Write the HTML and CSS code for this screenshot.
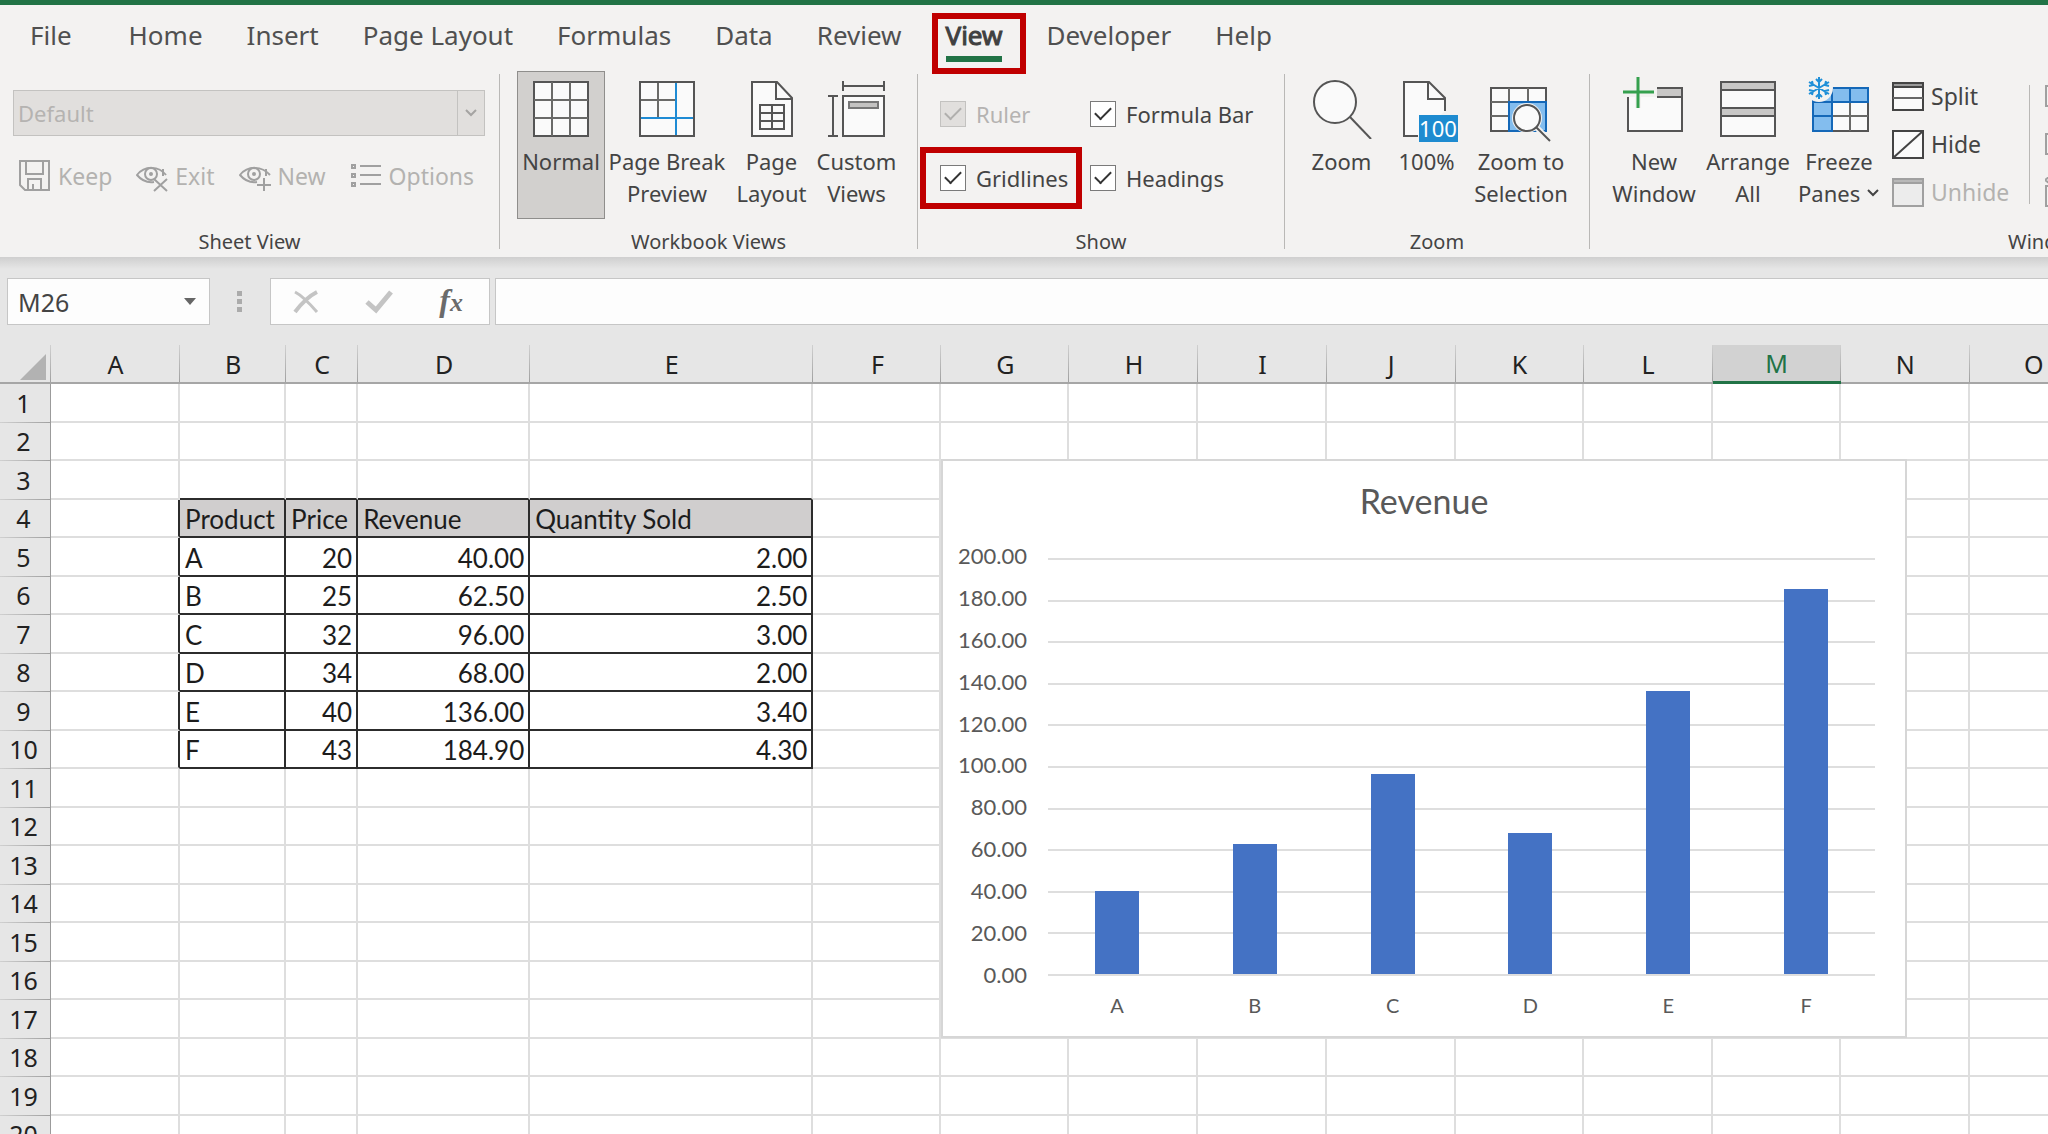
FILE: index.html
```html
<!DOCTYPE html>
<html lang="en">
<head>
<meta charset="utf-8">
<title>Workbook - View</title>
<link rel="stylesheet" href="styles.css">
</head>
<body>
<header class="chrome">
  <nav class="tabs" aria-label="Ribbon tabs">
    <a href="#file">File</a>
    <a href="#home">Home</a>
    <a href="#insert">Insert</a>
    <a href="#layout">Page Layout</a>
    <a href="#formulas">Formulas</a>
    <a href="#data">Data</a>
    <a href="#review">Review</a>
    <a href="#view" class="active" aria-current="page">View<span class="mark mark-tab"></span></a>
    <a href="#developer">Developer</a>
    <a href="#help">Help</a>
  </nav>

  <div class="ribbon">
    <section class="group group-sheetview">
      <div class="body">
        <div class="combo">
          <select aria-label="Sheet view" disabled><option>Default</option></select>
          <span class="combo-arrow"><svg width="14" height="10" viewBox="0 0 14 10"><path d="M2 2l5 5 5-5" fill="none" stroke="#a5a4a2" stroke-width="2"/></svg></span>
        </div>
        <div class="view-actions">
          <button class="flat" disabled>
            <svg width="32" height="32" viewBox="0 0 32 32" fill="none" stroke="#a0a0a0" stroke-width="2"><path d="M1 1h29v29H6l-5-5z"/><path d="M7 1v13h17V1M9 30V19h13v11M14 30v-6"/></svg>Keep</button>
          <button class="flat" disabled>
            <svg width="32" height="32" viewBox="0 0 32 32" fill="none" stroke="#a0a0a0" stroke-width="2"><path d="M30 15C23 6 9 5 1 15c5 6 10 8 17 7"/><circle cx="15" cy="14" r="6"/><circle cx="15" cy="14" r="1"/><path d="M27 9v7M18 19l13 12M31 19L18 31"/></svg>Exit</button>
          <button class="flat" disabled>
            <svg width="32" height="32" viewBox="0 0 32 32" fill="none" stroke="#a0a0a0" stroke-width="2"><path d="M31 15C23 6 9 5 1 15c5 6 10 8 17 7"/><circle cx="15" cy="14" r="6"/><circle cx="15" cy="14" r="1"/><path d="M27 9v7M25 18v13M18 25h14"/></svg>New</button>
          <button class="flat" disabled>
            <svg width="32" height="32" viewBox="0 0 32 32" fill="none" stroke="#a0a0a0" stroke-width="2"><path d="M2 5h3v3H2zM2 14h3v3H2zM2 23h3v3H2zM10 6h21M10 15h21M10 24h21"/></svg>Options</button>
        </div>
      </div>
      <h2>Sheet View</h2>
    </section>
    <span class="sep"></span>

    <section class="group group-workbook">
      <div class="body row">
        <button class="big w-normal pressed" aria-pressed="true">
          <svg width="62" height="62" viewBox="-3 0 62 62"><rect x="1" y="5" width="54" height="54" fill="#fafafa" stroke="#555" stroke-width="2"/><path d="M19 5v54M37 5v54M1 23h54M1 41h54" stroke="#6a6a68" stroke-width="2"/></svg>
          <span>Normal</span></button>
        <button class="big w-break">
          <svg width="62" height="62" viewBox="-3 0 62 62"><rect x="1" y="5" width="54" height="54" fill="#fafafa" stroke="#555" stroke-width="2"/><path d="M19 6v35M2 23h35" stroke="#6a6a68" stroke-width="2"/><path d="M37 6v52M2 41h52" stroke="#1e8bd4" stroke-width="2"/></svg>
          <span>Page Break<br>Preview</span></button>
        <button class="big w-layout">
          <svg width="62" height="62" viewBox="-10 0 62 62" stroke="#555" stroke-width="2"><path d="M1 5h25l15 16v38H1z" fill="#fafafa"/><path d="M25 5v17h16" fill="none"/><rect x="9" y="28" width="24" height="24" fill="#fafafa"/><path d="M21 28v24M9 36h24M9 44h24"/></svg>
          <span>Page<br>Layout</span></button>
        <button class="big w-layout">
          <svg width="62" height="62" viewBox="-2 0 62 62" stroke="#555" stroke-width="2"><rect x="15" y="19" width="41" height="40" fill="#fafafa"/><rect x="21" y="25" width="29" height="6" fill="#c4c3c2" stroke="#777"/><path d="M15 9h41M15 4v10M56 4v10M5 19v40M0 19h10M0 59h10"/></svg>
          <span>Custom<br>Views</span></button>
      </div>
      <h2>Workbook Views</h2>
    </section>
    <span class="sep"></span>

    <section class="group group-show">
      <div class="body checks">
        <label class="off"><input type="checkbox" checked disabled>Ruler</label>
        <label><input type="checkbox" checked>Formula Bar</label>
        <label><input type="checkbox" checked>Gridlines<span class="mark mark-check"></span></label>
        <label><input type="checkbox" checked>Headings</label>
      </div>
      <h2>Show</h2>
    </section>
    <span class="sep"></span>

    <section class="group group-zoom">
      <div class="body row">
        <button class="big w-zoom">
          <svg width="62" height="62" viewBox="-2 0 62 62" stroke="#555" stroke-width="2"><circle cx="22" cy="25" r="21" fill="#fafafa"/><path d="M37 40l21 22"/></svg>
          <span>Zoom</span></button>
        <button class="big w-zoom">
          <svg width="62" height="66" viewBox="-7 0 62 66"><path d="M42 34V21L26 5H1v54h14" fill="#fafafa" stroke="#555" stroke-width="2"/><path d="M25 5v17h16" fill="none" stroke="#555" stroke-width="2"/><rect x="16" y="38" width="39" height="27" fill="#1e8bd0"/><text x="35" y="60" class="icon-num">100</text></svg>
          <span>100%</span></button>
        <button class="big w-select">
          <svg width="62" height="66" viewBox="0 0 62 66"><path d="M1 11h55v43H1z" fill="#fafafa" stroke="#555" stroke-width="2"/><path d="M19 11v43M38 11v14M1 25h55M1 39h18" stroke="#6a6a68" stroke-width="2"/><path d="M19 25h37v29H19z" fill="#83bdee" stroke="#1468b8" stroke-width="2"/><circle cx="37" cy="41" r="15" fill="#f3f2f1"/><path d="M46 50l13 13" stroke="#f3f2f1" stroke-width="6"/><circle cx="37" cy="41" r="13" fill="#fafafa" stroke="#555" stroke-width="2"/><path d="M46 50l14 14" stroke="#555" stroke-width="2"/></svg>
          <span>Zoom to<br>Selection</span></button>
      </div>
      <h2>Zoom</h2>
    </section>
    <span class="sep"></span>

    <section class="group group-window">
      <div class="body row">
        <button class="big w-window">
          <svg width="62" height="62" viewBox="0 0 62 62"><path d="M5 20h54v34H5z" fill="#fafafa"/><path d="M34 11h25v9H34z" fill="#c8c7c6"/><path d="M34 11h25v43H5V20M34 20h25" fill="none" stroke="#555" stroke-width="2"/><path d="M15 0v31M0 15h31" stroke="#f3f2f1" stroke-width="6"/><path d="M15 0v31M0 15h31" stroke="#35a04e" stroke-width="3"/></svg>
          <span>New<br>Window</span></button>
        <button class="big w-window">
          <svg width="62" height="62" viewBox="-3 0 62 62" stroke="#555" stroke-width="2"><rect x="1" y="5" width="54" height="54" fill="#fafafa"/><path d="M1 5h54v8H1zM1 31h54v8H1z" fill="#c8c7c6"/></svg>
          <span>Arrange<br>All</span></button>
        <button class="big w-freeze">
          <svg width="62" height="62" viewBox="0 0 62 62" stroke-width="2"><path d="M24 25h36v29H24z" fill="#fafafa" stroke="#555"/><path d="M42 25v29M24 39h36" stroke="#6a6a68"/><path d="M5 11h55v14H24v29H5z" fill="#83bdee" stroke="#1468b8"/><path d="M24 11v14M42 11v14M5 39h19M5 25h19" stroke="#1468b8"/><circle cx="11" cy="11" r="14" fill="#f3f2f1"/><path d="M11 0v22M1 5l20 12M21 5L1 17M8 2l3 3 3-3M8 20l3-3 3 3M1 9l4-1-1-4M21 13l-4 1 1 4M1 13l4 1-1 4M21 9l-4-1 1-4" fill="none" stroke="#2090d8"/></svg>
          <span>Freeze<br>Panes <svg class="chev" width="14" height="10" viewBox="0 0 14 10"><path d="M2 2l5 5 5-5" fill="none" stroke="#444" stroke-width="2"/></svg></span></button>
        <div class="small-stack">
          <button class="flat"><svg width="32" height="29" viewBox="0 0 32 29" stroke="#444" stroke-width="2"><path d="M1 1h30v27H1z" fill="#fafafa"/><path d="M1 1h30v4H1z" fill="#999"/><path d="M1 16h30" stroke="#666"/></svg>Split</button>
          <button class="flat"><svg width="32" height="29" viewBox="0 0 32 29" stroke="#444" stroke-width="2"><path d="M1 1h30v27H1z" fill="#fafafa"/><path d="M1 28L31 1"/></svg>Hide</button>
          <button class="flat" disabled><svg width="32" height="29" viewBox="0 0 32 29" stroke="#a0a0a0" stroke-width="2"><path d="M1 1h30v27H1z" fill="#ececec"/><path d="M1 1h30v4H1z" fill="#b8b8b8"/></svg>Unhide</button>
        </div>
        <span class="sep sep-inner"></span>
        <div class="small-stack">
          <button class="flat" aria-label="View side by side" disabled><svg width="32" height="22" viewBox="0 0 32 22" fill="none" stroke="#a0a0a0" stroke-width="2"><path d="M1 1h12v20H1zM18 1h12v20H18z"/></svg></button>
          <button class="flat" aria-label="Synchronous scrolling" disabled><svg width="32" height="22" viewBox="0 0 32 22" fill="none" stroke="#a0a0a0" stroke-width="2"><path d="M1 1h12v20H1zM18 1h12v20H18z"/></svg></button>
          <button class="flat" aria-label="Reset window position" disabled><svg width="32" height="30" viewBox="0 0 32 30" fill="none" stroke="#a0a0a0" stroke-width="2"><path d="M1 9h12v20H1zM18 9h12v20H18zM4 0L0 3l4 3"/></svg></button>
        </div>
      </div>
      <h2>Window</h2>
    </section>
  </div>
</header>

<div class="formula-bar">
  <div class="name-box">
    <input type="text" value="M26" aria-label="Name box">
    <button aria-label="Show names"><svg width="12" height="7" viewBox="0 0 12 7"><path d="M0 0h12L6 7z" fill="#666"/></svg></button>
  </div>
  <svg class="grip" width="6" height="22" viewBox="0 0 6 22"><path d="M0 0h5v5H0zM0 8h5v5H0zM0 16h5v5H0z" fill="#ababab"/></svg>
  <div class="fx-box">
    <button aria-label="Cancel"><svg width="26" height="24" viewBox="0 0 26 24" fill="none" stroke="#c4c4c4"><path d="M2 2c8 4 15 12 22 20" stroke-width="3"/><path d="M24 2C14 7 8 14 2 22" stroke-width="4"/></svg></button>
    <button aria-label="Enter"><svg width="28" height="24" viewBox="0 0 28 24"><path d="M2 12l9 8L26 2" fill="none" stroke="#c4c4c4" stroke-width="5"/></svg></button>
    <button class="fx" aria-label="Insert function">f<small>x</small></button>
  </div>
  <input class="formula" type="text" aria-label="Formula">
</div>

<main class="sheet">
<table class="grid">
<colgroup><col class="c-row"><col class="c-odd"><col class="c-b"><col class="c-c"><col class="c-d"><col class="c-e"><col class="c-even"><col class="c-even"><col class="c-odd"><col class="c-even"><col class="c-odd"><col class="c-even"><col class="c-odd"><col class="c-even"><col class="c-odd"><col class="c-even"></colgroup>
<thead><tr><th class="corner"><svg width="26" height="26" viewBox="0 0 26 26"><path d="M26 0v26H0z" fill="#b2b2b2"/></svg></th><th>A</th><th>B</th><th>C</th><th>D</th><th>E</th><th>F</th><th>G</th><th>H</th><th>I</th><th>J</th><th>K</th><th>L</th><th class="current">M</th><th>N</th><th>O</th></tr></thead>
<tbody>
<tr><th>1</th><td></td><td></td><td></td><td></td><td></td><td></td><td></td><td></td><td></td><td></td><td></td><td></td><td></td><td></td><td></td></tr>
<tr><th>2</th><td></td><td></td><td></td><td></td><td></td><td></td><td></td><td></td><td></td><td></td><td></td><td></td><td></td><td></td><td></td></tr>
<tr><th>3</th><td></td><td class="kb"></td><td class="kb"></td><td class="kb"></td><td class="kb"></td><td></td><td></td><td></td><td></td><td></td><td></td><td></td><td></td><td></td><td></td></tr>
<tr><th>4</th><td class="kr"></td><td class="k head">Product</td><td class="k head">Price</td><td class="k head">Revenue</td><td class="k head">Quantity Sold</td><td></td><td></td><td></td><td></td><td></td><td></td><td></td><td></td><td></td><td></td></tr>
<tr><th>5</th><td class="kr"></td><td class="k">A</td><td class="k num">20</td><td class="k num">40.00</td><td class="k num">2.00</td><td></td><td></td><td></td><td></td><td></td><td></td><td></td><td></td><td></td><td></td></tr>
<tr><th>6</th><td class="kr"></td><td class="k">B</td><td class="k num">25</td><td class="k num">62.50</td><td class="k num">2.50</td><td></td><td></td><td></td><td></td><td></td><td></td><td></td><td></td><td></td><td></td></tr>
<tr><th>7</th><td class="kr"></td><td class="k">C</td><td class="k num">32</td><td class="k num">96.00</td><td class="k num">3.00</td><td></td><td></td><td></td><td></td><td></td><td></td><td></td><td></td><td></td><td></td></tr>
<tr><th>8</th><td class="kr"></td><td class="k">D</td><td class="k num">34</td><td class="k num">68.00</td><td class="k num">2.00</td><td></td><td></td><td></td><td></td><td></td><td></td><td></td><td></td><td></td><td></td></tr>
<tr><th>9</th><td class="kr"></td><td class="k">E</td><td class="k num">40</td><td class="k num">136.00</td><td class="k num">3.40</td><td></td><td></td><td></td><td></td><td></td><td></td><td></td><td></td><td></td><td></td></tr>
<tr><th>10</th><td class="kr"></td><td class="k">F</td><td class="k num">43</td><td class="k num">184.90</td><td class="k num">4.30</td><td></td><td></td><td></td><td></td><td></td><td></td><td></td><td></td><td></td><td></td></tr>
<tr><th>11</th><td></td><td></td><td></td><td></td><td></td><td></td><td></td><td></td><td></td><td></td><td></td><td></td><td></td><td></td><td></td></tr>
<tr><th>12</th><td></td><td></td><td></td><td></td><td></td><td></td><td></td><td></td><td></td><td></td><td></td><td></td><td></td><td></td><td></td></tr>
<tr><th>13</th><td></td><td></td><td></td><td></td><td></td><td></td><td></td><td></td><td></td><td></td><td></td><td></td><td></td><td></td><td></td></tr>
<tr><th>14</th><td></td><td></td><td></td><td></td><td></td><td></td><td></td><td></td><td></td><td></td><td></td><td></td><td></td><td></td><td></td></tr>
<tr><th>15</th><td></td><td></td><td></td><td></td><td></td><td></td><td></td><td></td><td></td><td></td><td></td><td></td><td></td><td></td><td></td></tr>
<tr><th>16</th><td></td><td></td><td></td><td></td><td></td><td></td><td></td><td></td><td></td><td></td><td></td><td></td><td></td><td></td><td></td></tr>
<tr><th>17</th><td></td><td></td><td></td><td></td><td></td><td></td><td></td><td></td><td></td><td></td><td></td><td></td><td></td><td></td><td></td></tr>
<tr><th>18</th><td></td><td></td><td></td><td></td><td></td><td></td><td></td><td></td><td></td><td></td><td></td><td></td><td></td><td></td><td></td></tr>
<tr><th>19</th><td></td><td></td><td></td><td></td><td></td><td></td><td></td><td></td><td></td><td></td><td></td><td></td><td></td><td></td><td></td></tr>
<tr><th>20</th><td></td><td></td><td></td><td></td><td></td><td></td><td></td><td></td><td></td><td></td><td></td><td></td><td></td><td></td><td></td></tr>
</tbody>
</table>

<figure class="chart">
  <figcaption>Revenue</figcaption>
  <div class="axis-y"><span>200.00</span><span>180.00</span><span>160.00</span><span>140.00</span><span>120.00</span><span>100.00</span><span>80.00</span><span>60.00</span><span>40.00</span><span>20.00</span><span>0.00</span></div>
  <div class="plot">
    <div class="slot"><i style="height:20%"></i></div>
    <div class="slot"><i style="height:31.25%"></i></div>
    <div class="slot"><i style="height:48%"></i></div>
    <div class="slot"><i style="height:34%"></i></div>
    <div class="slot"><i style="height:68%"></i></div>
    <div class="slot"><i style="height:92.45%"></i></div>
  </div>
  <div class="axis-x"><span>A</span><span>B</span><span>C</span><span>D</span><span>E</span><span>F</span></div>
</figure>
</main>
</body>
</html>
```
FILE: styles.css
```css
* { box-sizing: border-box; }

body {
  margin: 0;
  height: 100vh;
  display: flex;
  flex-direction: column;
  overflow: hidden;
  background: #e6e6e6;
  color: #444;
  font-family: "Noto Sans", "Open Sans", sans-serif;
  font-size: 22px;
}

button, input, select { font: inherit; color: inherit; }
button { border: 0; background: none; padding: 0; }
svg { display: block; flex: none; }

/* ribbon tabs */
.chrome {
  flex: none;
  border-top: 5px solid #217346;
  background: #f3f2f1;
  overflow: hidden;
}
.tabs {
  display: flex;
  gap: 44px;
  height: 66px;
  padding: 10px 30px 0;
  font-size: 26px;
  line-height: 40px;
}
.tabs a { position: relative; color: #505050; text-decoration: none; height: 47px; white-space: nowrap; }
.tabs a:first-child { margin-right: 13px; }
.tabs .active { color: #404040; -webkit-text-stroke: 1px #404040; border-bottom: 6px solid #217346; }
.mark { position: absolute; border: 6px solid #c00000; pointer-events: none; }
.mark-tab { inset: -2px -24px -18px -14px; }
.mark-check { inset: -17px -14px -17px -20px; }

/* ribbon groups */
.ribbon { display: flex; }
.group { display: flex; flex-direction: column; flex: none; }
.group h2 {
  margin: 0 0 1px;
  font-size: 20px;
  font-weight: 400;
  line-height: 28px;
  text-align: center;
}
.body { height: 157px; }
.row { display: flex; }
.sep { flex: none; width: 1px; margin: 3px 0 8px; background: #b9b8b6; }
.group-sheetview { width: 499px; }
.group-workbook { width: 417px; }
.group-show { width: 366px; }
.group-zoom { width: 304px; }
.group-window { width: 912px; }
.group-workbook .body { padding-left: 17px; }
.group-zoom .body { padding-left: 14px; }
.group-window .body { padding-left: 17px; }

.combo {
  display: flex;
  height: 46px;
  margin: 19px 14px 0 13px;
  border: 1px solid #c3c2c0;
  background: #e1dfdd;
}
.combo select {
  flex: 1;
  appearance: none;
  border: 0;
  padding: 0 4px;
  background: none;
  color: #b5b3b1;
  opacity: 1;
}
.combo-arrow { display: flex; align-items: center; justify-content: center; width: 27px; border-left: 1px solid #c3c2c0; }
.view-actions { display: flex; gap: 24px; padding: 24px 0 0 19px; }

.flat { display: flex; align-items: center; gap: 7px; height: 32px; font-size: 23px; line-height: 32px; color: #444; white-space: nowrap; }
.flat:disabled { color: #b3b2b0; }

.big {
  display: flex;
  flex-direction: column;
  align-items: center;
  flex: none;
  height: 148px;
  padding-top: 5px;
  border: 1px solid transparent;
  line-height: 32px;
  text-align: center;
  white-space: nowrap;
}
.big > svg { height: 66px; margin-bottom: 2px; }
.big > svg[height="62"] { height: 62px; margin-bottom: 6px; }
.pressed { background: #d2d0ce; border-color: #8f8e8c; }
.w-normal { width: 88px; }
.w-break { width: 124px; }
.w-layout { width: 85px; }
.w-zoom { width: 85px; }
.w-select { width: 104px; }
.w-window { width: 94px; }
.w-freeze { width: 88px; }
.chev { display: inline-block; vertical-align: 4px; }
.icon-num { font: 22px "Liberation Sans Narrow", "Noto Sans", sans-serif; fill: #fff; text-anchor: middle; }

.checks {
  display: grid;
  grid-template-columns: 150px 1fr;
  grid-template-rows: 28px 28px;
  row-gap: 36px;
  padding: 29px 0 0 22px;
}
.checks label { position: relative; display: flex; align-items: center; gap: 10px; justify-self: start; white-space: nowrap; line-height: 28px; }
.checks .off { color: #b5b3b1; }
.checks input {
  appearance: none;
  width: 26px;
  height: 26px;
  margin: 0;
  border: 1px solid #7a7a7a;
  background: #fff;
  display: grid;
  place-items: center;
}
.checks input::before {
  content: "";
  width: 14px;
  height: 7px;
  margin-top: -5px;
  border: solid #333;
  border-width: 0 0 2px 2px;
  rotate: -45deg;
}
.checks input:disabled { background: #e1dfdd; border-color: #c3c2c0; }
.checks input:disabled::before { border-color: #b0afad; }

.small-stack { display: flex; flex-direction: column; gap: 16px; padding: 9px 0 0 9px; width: 147px; }
.sep-inner { margin: 14px 6px 24px -1px; }

/* formula bar */
.formula-bar {
  flex: none;
  display: flex;
  align-items: center;
  height: 88px;
  padding: 21px 0 20px 7px;
  background: linear-gradient(#cfcfcf, #e6e6e6 12px);
}
.name-box, .fx-box, .formula { height: 47px; border: 1px solid #c6c6c6; background: #fdfdfd; }
.name-box { display: flex; align-items: center; width: 203px; padding-right: 13px; }
.name-box input { flex: 1; min-width: 0; border: 0; padding: 0 10px; background: none; font-size: 25px; }
.grip { margin: 0 27px 0 27px; }
.fx-box { display: flex; align-items: center; justify-content: space-between; width: 220px; padding: 0 26px 0 22px; margin-right: 5px; }
.fx { font: italic bold 32px/40px "Liberation Serif", serif; color: #6a6a6a; }
.fx small { font-size: 26px; }
.formula { flex: 1; border-right: 0; padding: 0 10px; }

/* worksheet */
.sheet { position: relative; flex: 1; min-height: 0; overflow: hidden; }
.grid { table-layout: fixed; width: 2098px; border-collapse: separate; border-spacing: 0; }
.c-row { width: 51px; }
.c-odd { width: 129px; }
.c-even { width: 128px; }
.c-b { width: 106px; }
.c-c { width: 72px; }
.c-d { width: 172px; }
.c-e { width: 283px; }
.grid th {
  padding: 0;
  font-weight: 400;
  font-size: 25px;
  line-height: 34px;
  color: #222;
  background: #e6e6e6;
}
.grid thead th {
  height: 39px;
  border-bottom: 2px solid #a6a6a6;
  background: linear-gradient(#d0d0d0, #a0a0a0) right / 1px 100% no-repeat #e6e6e6;
}
.grid thead .corner svg { margin: 6px 0 0 20px; }
.grid thead .current { background-color: #d2d2d2; border-bottom: 3px solid #217346; color: #217346; }
.grid tbody th {
  padding: 0 3px 2px 0;
  border-right: 1px solid #9b9b9b;
  background: linear-gradient(90deg, #d0d0d0, #a0a0a0) bottom / 100% 1px no-repeat #e6e6e6;
}
.grid tbody tr { height: 38px; }
.grid tbody tr:nth-child(odd) { height: 39px; }
.grid td {
  padding: 2px 4px 0 5px;
  border: solid #dedede;
  border-width: 0 2px 2px 0;
  background: #fff;
  color: #1c1c1c;
  font: 26px/30px Lato, "Noto Sans", sans-serif;
  white-space: nowrap;
}
.grid .k { border-color: #2c2c2c; }
.grid .kb { border-bottom-color: #2c2c2c; }
.grid .kr { border-right-color: #2c2c2c; }
.grid .head { background: #d0cece; }
.grid .num { text-align: right; }

/* embedded chart, floats over the cells */
.chart {
  position: absolute;
  left: 941px;
  top: 114px;
  width: 966px;
  height: 579px;
  margin: 0;
  padding: 0 30px 19px 0;
  border: 2px solid #d6d6d6;
  background: #fff;
  display: grid;
  grid-template-columns: 105px 1fr;
  grid-template-rows: 97px 1fr 41px;
  font-family: Lato, "Noto Sans", sans-serif;
  color: #595959;
}
.chart figcaption { grid-column: 1 / 3; padding: 20px 0 0 30px; font-size: 34px; line-height: 40px; text-align: center; }
.axis-y { display: flex; flex-direction: column; justify-content: space-between; margin: -14px 21px -11px 0; text-align: right; font-size: 22px; line-height: 24px; }
.plot {
  display: flex;
  background: repeating-linear-gradient(#dedede 0 2px, transparent 2px 10%);
  border-bottom: 2px solid #dedede;
}
.slot { flex: 1; display: flex; align-items: flex-end; justify-content: center; }
.slot i { width: 44px; background: #4472c4; }
.axis-x { grid-column: 2; display: flex; align-items: flex-end; font-size: 20px; line-height: 24px; }
.axis-x span { flex: 1; text-align: center; }
```
